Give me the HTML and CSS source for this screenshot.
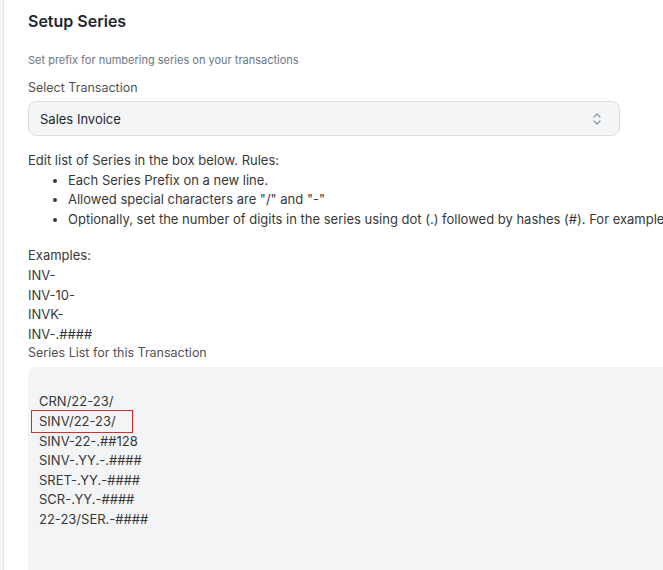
FILE: index.html
```html
<!DOCTYPE html>
<html lang="en">
<head>
    <meta charset="UTF-8">
    <meta name="viewport" content="width=device-width, initial-scale=1.0">
    <title>Setup Series</title>
    <link rel="stylesheet" href="styles.css">
</head>
<body>
    <div class="page-card">
        <h3 class="section-title">Setup Series</h3>
        <p class="section-desc">Set prefix for numbering series on your transactions</p>

        <!-- Transaction select -->
        <div class="field">
            <label class="field-label" for="transaction">Select Transaction</label>
            <div class="select-wrap">
                <select id="transaction" class="control">
                    <option>Sales Invoice</option>
                </select>
                <svg class="select-icon" width="10" height="14" viewBox="0 0 10 14" fill="none" stroke="#8d99a6" stroke-width="1.2" stroke-linecap="round" stroke-linejoin="round">
                    <path d="M2 5l3-3 3 3"/>
                    <path d="M2 9l3 3 3-3"/>
                </svg>
            </div>
        </div>

        <!-- Help text -->
        <div class="help-text">
            <div>Edit list of Series in the box below. Rules:</div>
            <ul class="rules">
                <li>Each Series Prefix on a new line.</li>
                <li>Allowed special characters are "/" and "-"</li>
                <li>Optionally, set the number of digits in the series using dot (.) followed by hashes (#). For example, ".####" means that the series will have four digits. Default is five digits.</li>
            </ul>
            <div class="examples">
                Examples:<br>
                INV-<br>
                INV-10-<br>
                INVK-<br>
                INV-.####
            </div>
        </div>

        <!-- Series list -->
        <div class="field series-field">
            <label class="field-label" for="series">Series List for this Transaction</label>
            <div class="series-wrap">
                <textarea id="series" class="series-box" spellcheck="false">
CRN/22-23/
SINV/22-23/
SINV-22-.##128
SINV-.YY.-.####
SRET-.YY.-####
SCR-.YY.-####
22-23/SER.-####</textarea>
                <div class="mark"></div>
            </div>
        </div>
    </div>
</body>
</html>
```

FILE: styles.css
```css
html, body {
    overflow: hidden;
}
body {
    margin: 0;
    background-color: #f4f5f6;
    font-family: Inter, "Noto Sans", sans-serif;
    color: #383838;
}
.page-card {
    margin-left: 3px;
    width: 900px;
    min-height: 600px;
    padding: 11px 24px 0;
    background-color: #fff;
    border-left: 1px solid #e2e6e9;
}
.section-title {
    margin: 0;
    font-size: 16px;
    font-weight: 600;
    color: #1f272e;
}
.section-desc {
    margin: 22px 0 0;
    font-size: 11px;
    color: #6c7680;
}
.field-label {
    display: block;
    margin-top: 13px;
    margin-bottom: 6px;
    font-size: 12.5px;
    color: #525252;
}
.select-wrap {
    position: relative;
    width: 592px;
}
.control {
    width: 100%;
    height: 35px;
    padding: 0 11px;
    border: 1px solid #dcdfe2;
    border-radius: 8px;
    background-color: #f4f5f6;
    font-family: inherit;
    font-size: 13px;
    color: #1f272e;
    appearance: none;
}
.select-icon {
    position: absolute;
    right: 18px;
    top: 11px;
}
.help-text {
    margin-top: 15px;
    font-size: 13px;
    line-height: 19.6px;
    color: #383838;
}
.rules {
    margin: 0;
    padding-left: 40px;
    white-space: nowrap;
}
.examples {
    margin-top: 17px;
}
.series-field .field-label {
    margin-top: 1px;
    margin-bottom: 7px;
}
.series-wrap {
    position: relative;
}
.series-box {
    display: block;
    width: 700px;
    height: 260px;
    padding: 25px 11px;
    border: none;
    border-radius: 8px;
    background-color: #f3f4f6;
    font-family: inherit;
    font-size: 13px;
    line-height: 19.6px;
    color: #383838;
    resize: none;
    outline: none;
}
.mark {
    position: absolute;
    left: 3px;
    top: 43px;
    width: 100px;
    height: 21px;
    border: 1px solid #d92b2b;
}
```
